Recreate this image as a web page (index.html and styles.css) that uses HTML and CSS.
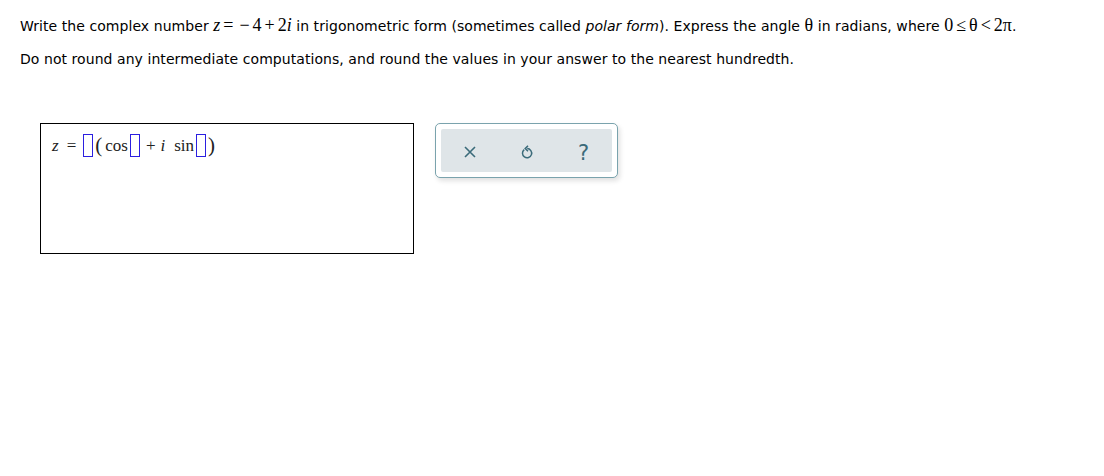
FILE: index.html
```html
<!DOCTYPE html>
<html lang="en">
<head>
  <meta charset="UTF-8">
  <title>Trigonometric form</title>
  <link rel="stylesheet" href="styles.css">
</head>
<body>

<div class="question">
  <p class="line">Write the complex number <span class="math"><i>z</i><span class="op">=</span><span class="op">&minus;</span>4<span class="op">+</span>2<i>i</i></span> in trigonometric form (sometimes called <em>polar form</em>). Express the angle <span class="math">&theta;</span> in radians, where <span class="math">0<span class="op">&le;</span>&theta;<span class="op">&lt;</span>2&pi;</span>.</p>
  <p class="line">Do not round any intermediate computations, and round the values in your answer to the nearest hundredth.</p>
</div>

<div class="answer-row">
  <div class="answer-box">
    <div class="formula">
      <i class="var">z</i>
      <span class="eq">=</span>
      <span class="slot"></span><span class="paren">(</span><span class="fn">cos</span><span class="slot"></span>
      <span class="plus">+</span>
      <i class="var">i</i>
      <span class="fn">sin</span><span class="slot"></span><span class="paren">)</span>
    </div>
  </div>

  <div class="toolbar">
    <div class="toolbar-inner">
      <button class="tool" title="Clear">
        <svg width="14" height="14" viewBox="0 0 14 14"><path d="M2 2 L12 12 M12 2 L2 12" stroke="#3b6b7a" stroke-width="1.6" fill="none"/></svg>
      </button>
      <button class="tool" title="Undo">
        <svg width="14" height="16" viewBox="0 0 14 16"><path d="M4.2 5.6 A4.6 4.6 0 1 0 7.2 4.6" stroke="#3b6b7a" stroke-width="1.5" fill="none"/><path d="M8 1.8 L5.2 4.6 L8 7.2" stroke="#3b6b7a" stroke-width="1.5" fill="none"/></svg>
      </button>
      <button class="tool help" title="Help">?</button>
    </div>
  </div>
</div>

</body>
</html>
```

FILE: styles.css
```css
body {
  margin: 0;
  background: #fff;
  font-family: "DejaVu Sans", Verdana, sans-serif;
  color: #000;
}

.question {
  padding: 16px 20px 0;
}

.line {
  margin: 0 0 15px;
  font-size: 14px;
  letter-spacing: 0.06px;
  line-height: 18px;
}

.math {
  font-family: "Liberation Serif", "DejaVu Serif", serif;
  font-size: 18px;
  letter-spacing: 0;
}

.math i {
  font-family: "Liberation Serif", "DejaVu Serif", serif;
  font-style: italic;
}

.math .op {
  margin: 0 3px;
}

.answer-row {
  display: flex;
  align-items: flex-start;
  gap: 21px;
  margin: 55px 0 0 40px;
}

.answer-box {
  width: 372px;
  height: 129px;
  border: 1px solid #000;
}

.formula {
  display: flex;
  align-items: center;
  gap: 2px;
  padding: 9px 0 0 11px;
  font-family: "Liberation Serif", "DejaVu Serif", serif;
  font-size: 17px;
  color: #222;
}

.var {
  font-family: "Liberation Serif", "DejaVu Serif", serif;
  font-style: italic;
  margin-right: 6px;
}

.eq {
  margin-right: 5px;
}

.plus {
  margin: 0 3px 0 4px;
}

.slot {
  display: inline-block;
  width: 8px;
  height: 21px;
  border: 1px solid #2b1fe0;
}

.paren {
  font-size: 21px;
}

.fn {
  margin-left: 1px;
}

.toolbar {
  border: 1px solid #7aa3ad;
  border-radius: 5px;
  padding: 5px;
  background: #fff;
  box-shadow: 2px 3px 5px rgba(0, 0, 0, 0.12);
}

.toolbar-inner {
  display: flex;
  width: 171px;
  height: 43px;
  background: #dfe5e8;
  border-radius: 2px;
}

.tool {
  flex: 1;
  border: 0;
  background: none;
  display: flex;
  align-items: center;
  justify-content: center;
  padding: 2px 0 0;
}

.help {
  font-family: "DejaVu Sans", sans-serif;
  font-size: 21px;
  color: #3b6b7a;
  padding-top: 4px;
}
```
